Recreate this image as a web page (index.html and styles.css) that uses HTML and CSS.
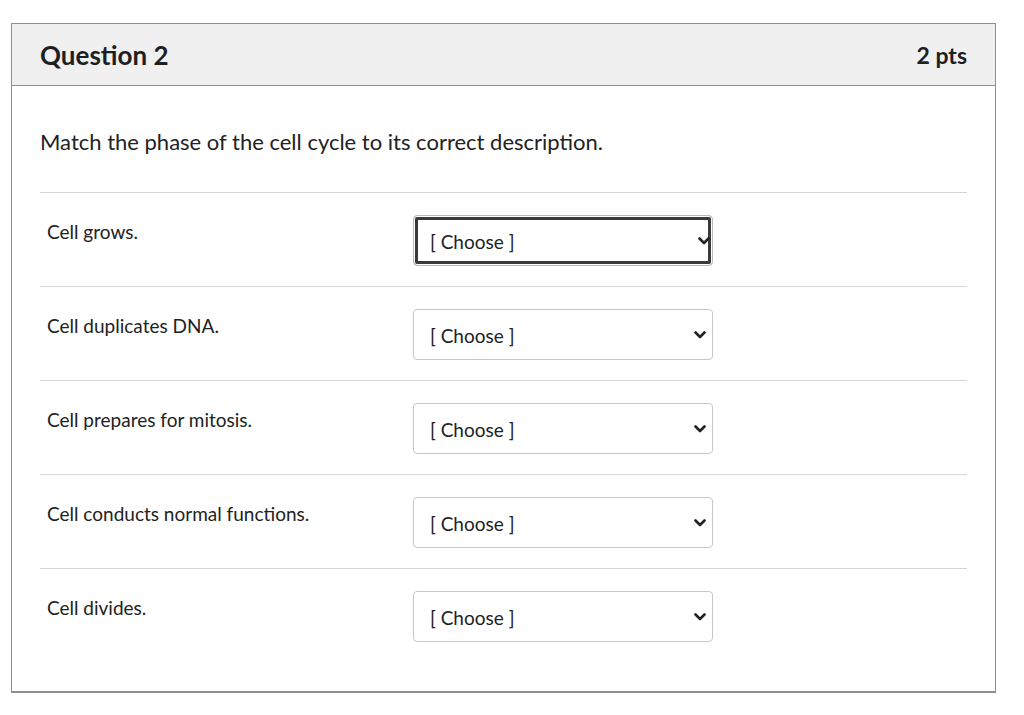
FILE: index.html
```html
<!DOCTYPE html>
<html>
<head>
<meta charset="utf-8">
<link rel="stylesheet" href="styles.css">
</head>
<body>
<div class="quiz">
  <div class="quiz-header">
    <h2 class="title">Question 2</h2>
    <span class="points">2 pts</span>
  </div>
  <div class="quiz-body">
    <p class="intro">Match the phase of the cell cycle to its correct description.</p>
    <div class="rows">
      <div class="row">
        <div class="label">Cell grows.</div>
        <div class="select focused"><span>[ Choose ]</span><svg class="chev" viewBox="0 0 12 8" width="12" height="8"><path d="M1.5 1.5 L6 6 L10.5 1.5" fill="none" stroke="#222" stroke-width="2.6" stroke-linecap="round" stroke-linejoin="round"/></svg></div>
      </div>
      <div class="row">
        <div class="label">Cell duplicates DNA.</div>
        <div class="select"><span>[ Choose ]</span><svg class="chev" viewBox="0 0 12 8" width="12" height="8"><path d="M1.5 1.5 L6 6 L10.5 1.5" fill="none" stroke="#222" stroke-width="2.6" stroke-linecap="round" stroke-linejoin="round"/></svg></div>
      </div>
      <div class="row">
        <div class="label">Cell prepares for mitosis.</div>
        <div class="select"><span>[ Choose ]</span><svg class="chev" viewBox="0 0 12 8" width="12" height="8"><path d="M1.5 1.5 L6 6 L10.5 1.5" fill="none" stroke="#222" stroke-width="2.6" stroke-linecap="round" stroke-linejoin="round"/></svg></div>
      </div>
      <div class="row">
        <div class="label">Cell conducts normal functions.</div>
        <div class="select"><span>[ Choose ]</span><svg class="chev" viewBox="0 0 12 8" width="12" height="8"><path d="M1.5 1.5 L6 6 L10.5 1.5" fill="none" stroke="#222" stroke-width="2.6" stroke-linecap="round" stroke-linejoin="round"/></svg></div>
      </div>
      <div class="row">
        <div class="label">Cell divides.</div>
        <div class="select"><span>[ Choose ]</span><svg class="chev" viewBox="0 0 12 8" width="12" height="8"><path d="M1.5 1.5 L6 6 L10.5 1.5" fill="none" stroke="#222" stroke-width="2.6" stroke-linecap="round" stroke-linejoin="round"/></svg></div>
      </div>
    </div>
  </div>
</div>
</body>
</html>
```
FILE: styles.css
```css
html, body {
  margin: 0;
  padding: 0;
  background: #ffffff;
}
body {
  font-family: Lato, "Open Sans", "Liberation Sans", sans-serif;
  color: #222222;
  padding: 23px 0 0 11px;
}
.quiz {
  width: 983px;
  border: 1px solid #8e8e8e;
  border-bottom: 2px solid #8e8e8e;
  box-sizing: content-box;
}
.quiz-header {
  height: 61px;
  background: #f0f0f0;
  border-bottom: 1px solid #8e8e8e;
  display: flex;
  align-items: center;
  justify-content: space-between;
  padding: 0 28px 0 28px;
}
.title {
  margin: 0;
  font-size: 26px;
  font-weight: 700;
  color: #1f1f1f;
}
.points {
  font-size: 23px;
  font-weight: 700;
  color: #1f1f1f;
}
.quiz-body {
  padding: 41px 28px 29px 28px;
}
.intro {
  margin: 0 0 35px 0;
  font-size: 22px;
  line-height: 30px;
}
.row {
  height: 93px;
  border-top: 1px solid #d6d6d6;
  display: flex;
  align-items: flex-start;
}
.label {
  width: 366px;
  padding-left: 7px;
  padding-top: 26px;
  font-size: 19px;
  line-height: 26px;
}
.select {
  position: relative;
  margin-top: 22px;
  width: 300px;
  height: 51px;
  border: 1px solid #c4c8cc;
  border-radius: 4px;
  display: flex;
  align-items: center;
  padding-left: 16px;
  box-sizing: border-box;
  font-size: 19px;
  color: #222222;
}
.select span {
  flex: 1;
  margin-top: 1px;
}
.select.focused {
  border-color: #b9b9b9;
  box-shadow: inset 0 0 0 1px #ffffff, inset 0 0 0 4px #3a3a3a;
}
.chev {
  margin-right: 6px;
}
.select.focused .chev {
  margin-right: 2px;
}
```
